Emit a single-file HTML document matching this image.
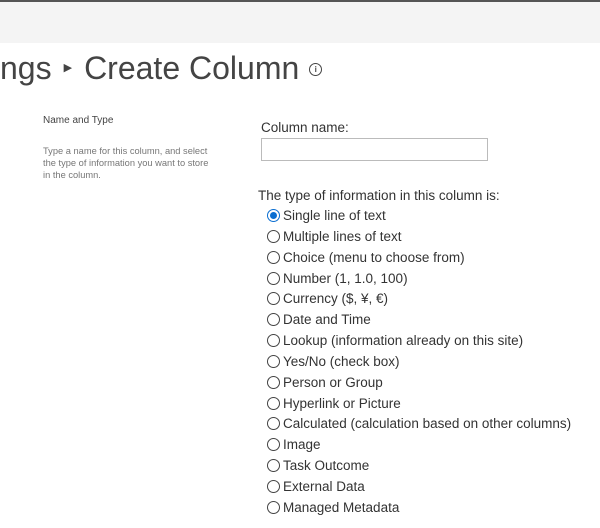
<!DOCTYPE html>
<html><head><style>
body{margin:0;width:600px;height:528px;overflow:hidden;background:#fff;font-family:"Liberation Sans",sans-serif;color:#333;position:relative}
.top{position:absolute;left:0;top:0;width:600px;height:2px;background:#555}
.band{position:absolute;left:0;top:2px;width:600px;height:41px;background:#f4f4f4}
.h{position:absolute;top:50px;left:0px;font-size:32px;font-weight:300;color:#444;white-space:nowrap}
.h .arr{font-size:11px;vertical-align:middle;position:relative;top:-3px;margin:0 12px}
.info{display:inline-block;width:11px;height:11px;border:1.3px solid #444;border-radius:50%;font-size:8px;text-align:center;line-height:11px;vertical-align:middle;margin-left:10px;position:relative;top:-1px;font-weight:bold}
.a{position:absolute;white-space:nowrap}
.lab{font-size:10px;color:#444}
.desc{font-size:9.3px;color:#777;line-height:12px}
.f{font-size:13.5px;color:#333}
.inp{position:absolute;left:261px;top:138px;width:225px;height:21px;border:1px solid #bbb}
.r{position:absolute;left:267px;font-size:13.5px;color:#333;white-space:nowrap}
.r i{position:absolute;left:0;top:1px;width:11px;height:11px;border:1px solid #444;border-radius:50%}
.r span{position:absolute;left:16px;top:0}
.r.s i{border-color:#0a6ed1}
.r.s i:after{content:"";position:absolute;left:2px;top:2px;width:7px;height:7px;border-radius:50%;background:#0a6ed1}
</style></head><body>
<div class="top"></div><div class="band"></div>
<div class="h">ngs<span class="arr">▶</span>Create Column<span class="info">i</span></div>
<div class="a lab" style="left:43px;top:115px">Name and Type</div>
<div class="a desc" style="left:43px;top:145px">Type a name for this column, and select<br>the type of information you want to store<br>in the column.</div>
<div class="a f" style="left:261px;top:120px">Column name:</div>
<div class="inp"></div>
<div class="a f" style="left:258px;top:188px">The type of information in this column is:</div>
<div class="r s" style="top:208px"><i></i><span>Single line of text</span></div>
<div class="r" style="top:229px"><i></i><span>Multiple lines of text</span></div>
<div class="r" style="top:250px"><i></i><span>Choice (menu to choose from)</span></div>
<div class="r" style="top:271px"><i></i><span>Number (1, 1.0, 100)</span></div>
<div class="r" style="top:291px"><i></i><span>Currency ($, ¥, €)</span></div>
<div class="r" style="top:312px"><i></i><span>Date and Time</span></div>
<div class="r" style="top:333px"><i></i><span>Lookup (information already on this site)</span></div>
<div class="r" style="top:354px"><i></i><span>Yes/No (check box)</span></div>
<div class="r" style="top:375px"><i></i><span>Person or Group</span></div>
<div class="r" style="top:396px"><i></i><span>Hyperlink or Picture</span></div>
<div class="r" style="top:416px"><i></i><span>Calculated (calculation based on other columns)</span></div>
<div class="r" style="top:437px"><i></i><span>Image</span></div>
<div class="r" style="top:458px"><i></i><span>Task Outcome</span></div>
<div class="r" style="top:479px"><i></i><span>External Data</span></div>
<div class="r" style="top:500px"><i></i><span>Managed Metadata</span></div>
</body></html>
